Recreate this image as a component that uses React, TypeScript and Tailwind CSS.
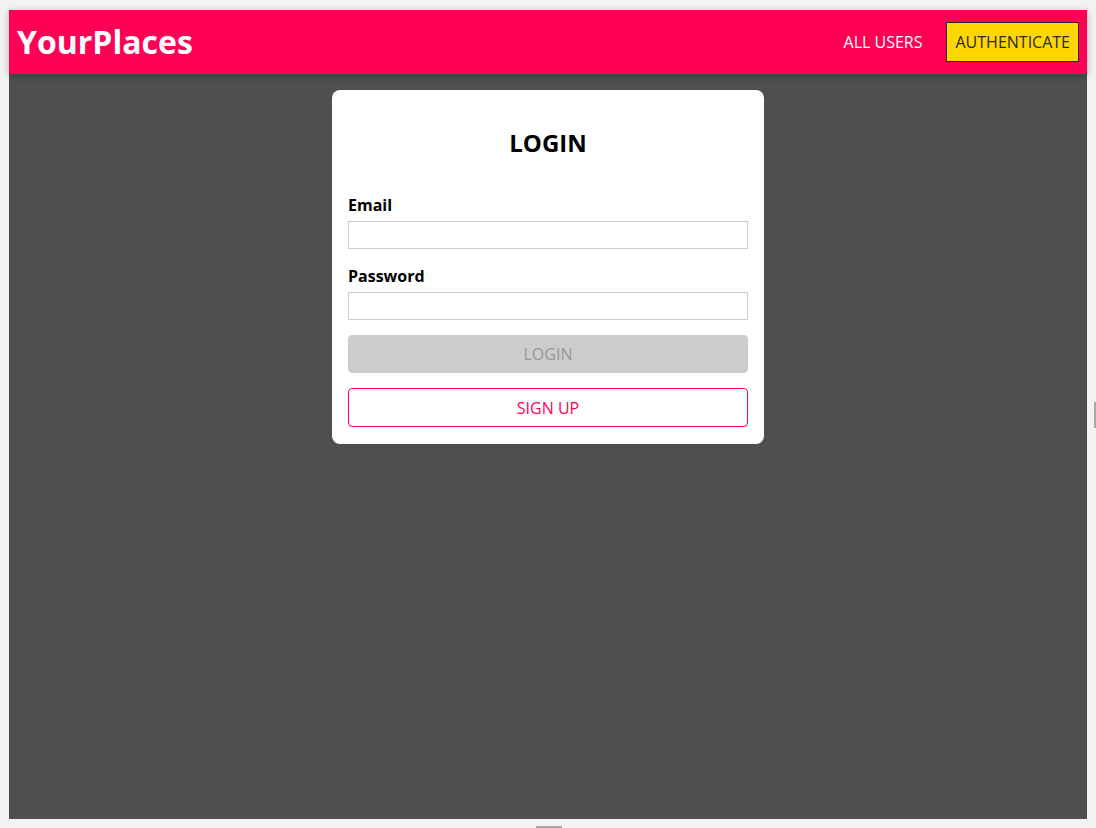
import React from 'react';

const font = { fontFamily: '"Open Sans", "Noto Sans", sans-serif' };

const Field = ({ label, type }: { label: string; type: string }) => (
  <div className="mb-4 flex flex-col">
    <label className="mb-[5px] block text-[16px] font-bold leading-[22px] text-black">{label}</label>
    <input
      type={type}
      className="block h-[28px] w-full border border-[#cccccc] bg-white px-1 text-[16px] outline-none"
    />
  </div>
);

export default function App() {
  return (
    <div className="relative h-[828px] w-[1096px] bg-[#f1f2f3] pl-[9px] pt-[10px]" style={font}>
      <div className="flex h-[809px] w-[1078px] flex-col bg-[#4f4f4f]">
        <header className="relative z-10 flex h-[64px] shrink-0 items-center justify-between bg-[#ff0055] pl-2 shadow-[0_2px_8px_rgba(0,0,0,0.26)]">
          <h1 className="text-[32px] font-bold leading-[44px] text-white">YourPlaces</h1>
          <nav className="flex items-center gap-[15px] pr-2">
            <a className="border border-transparent p-2 text-[16px] leading-[22px] text-white">ALL USERS</a>
            <a className="border border-[#292929] bg-[#ffd600] p-2 text-[16px] leading-[22px] text-[#292929]">
              AUTHENTICATE
            </a>
          </nav>
        </header>

        <main className="flex justify-center pt-4">
          <div className="w-[432px] rounded-lg bg-white p-4 pb-[17px]">
            <h2 className="mt-[20px] text-center text-[24px] font-bold leading-[33px] text-black">LOGIN</h2>
            <form className="mt-[35px] flex flex-col" onSubmit={(e) => e.preventDefault()}>
              <Field label="Email" type="email" />
              <Field label="Password" type="password" />
              <button
                type="submit"
                disabled
                className="-mt-[1px] h-[38px] w-full rounded border border-[#cccccc] bg-[#cccccc] text-[16px] text-[#979797]"
              >
                LOGIN
              </button>
              <button
                type="button"
                className="mt-[15px] h-[39px] w-full rounded border border-[#ff0055] bg-transparent text-[16px] text-[#ff0055]"
              >
                SIGN UP
              </button>
            </form>
          </div>
        </main>
      </div>

      {/* scroll handles from the capture */}
      <div className="absolute left-[1094px] top-[402px] h-[26px] w-[2px] bg-[#a8a8a8]" />
      <div className="absolute left-[536px] top-[826px] h-[2px] w-[26px] bg-[#a8a8a8]" />
    </div>
  );
}
